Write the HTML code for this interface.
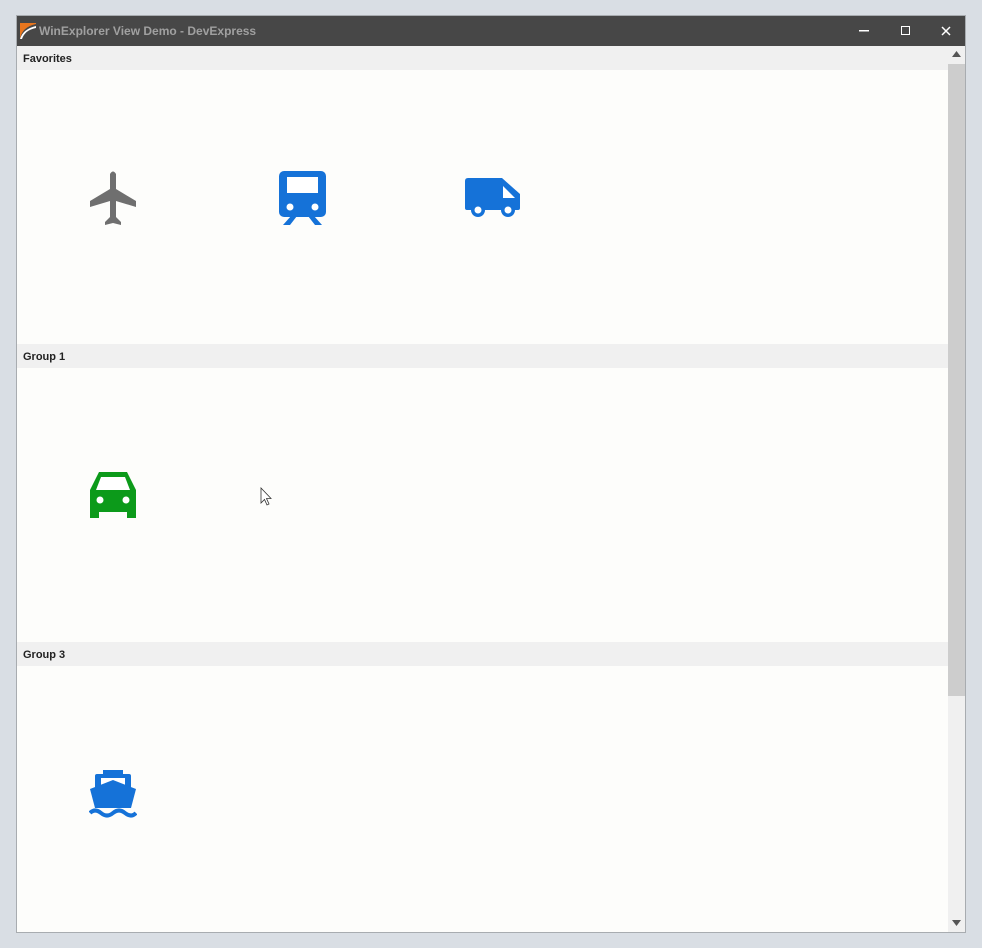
<!DOCTYPE html>
<html><head><style>
body{margin:0;width:982px;height:948px;background:#d9dee4;position:relative;overflow:hidden;font-family:"Liberation Sans",sans-serif}
.win{position:absolute;left:16px;top:15px;width:950px;height:918px;background:#fdfdfb;border:1px solid #a8acb0;box-sizing:border-box}
.title{position:absolute;left:0;top:0;width:948px;height:30px;background:#474747;color:#a0a0a0;font-size:12px;font-weight:bold;line-height:30px}
.title span{position:absolute;left:22px}
.hdr{position:absolute;left:0;width:931px;height:24px;background:#f0f0f0;font-size:11px;font-weight:bold;color:#222;line-height:26px;padding-left:6px;box-sizing:border-box}
.sb{position:absolute;left:931px;top:30px;width:17px;height:886px;background:#f0f0f0}
.thumb{position:absolute;left:0;top:18px;width:17px;height:632px;background:#cdcdcd}
svg{position:absolute}
</style></head><body>
<div class="win">
<div class="title">
<svg style="left:3px;top:7px" width="16" height="16" viewBox="0 0 16 16"><rect width="16" height="16" fill="#474747"/><path d="M0 16 Q2 4 16 1 L16 0 L0 0Z" fill="#e8761e"/><path d="M0 16 Q3 6 16 3 L16 5 Q5 7 2 16Z" fill="#fff"/></svg>
<span>WinExplorer View Demo - DevExpress</span>
<svg style="left:842px;top:14px" width="10" height="2"><rect width="10" height="1.5" fill="#fff"/></svg>
<svg style="left:884px;top:10px" width="10" height="10"><rect x="0.5" y="0.5" width="8" height="8" fill="none" stroke="#fff"/></svg>
<svg style="left:924px;top:10px" width="10" height="10"><path d="M1 1L9 9M9 1L1 9" stroke="#fff" stroke-width="1.5"/></svg>
</div>
<div class="hdr" style="top:30px">Favorites</div>
<div class="hdr" style="top:328px">Group 1</div>
<div class="hdr" style="top:626px">Group 3</div>
<div class="sb"><div class="thumb"></div>
<svg style="left:4px;top:5px" width="9" height="6"><path d="M0 6L4.5 0L9 6Z" fill="#555"/></svg>
<svg style="left:4px;top:874px" width="9" height="6"><path d="M0 0L4.5 6L9 0Z" fill="#555"/></svg>
</div>
</div>
<svg style="left:89px;top:170px" width="48" height="56" viewBox="0 0 48 56"><path d="M21 4Q24 -1 27 4L27 19L47 31L47 37L27 31L27 47L32 52L32 55L24 53L16 55L16 52L21 47L21 31L1 37L1 31L21 19Z" fill="#6f6f6f"/></svg>
<svg style="left:279px;top:170px" width="48" height="56" viewBox="0 0 48 56"><rect x="0" y="1" width="47" height="46" rx="5" fill="#1572d8"/><rect x="8" y="7" width="31" height="16" fill="#fff"/><circle cx="11" cy="37" r="3.5" fill="#fff"/><circle cx="36" cy="37" r="3.5" fill="#fff"/><path d="M12 46L4 55H11L18 46ZM35 46L43 55H36L29 46Z" fill="#1572d8"/></svg>
<svg style="left:465px;top:178px" width="56" height="40" viewBox="0 0 56 40"><path d="M0 3Q0 0 3 0H37L55 16V30Q55 32 53 32H2Q0 32 0 30Z" fill="#1572d8"/><path d="M38 8L50 20H38Z" fill="#fff"/><circle cx="13" cy="32" r="7" fill="#1572d8"/><circle cx="13" cy="32" r="3.5" fill="#fff"/><circle cx="43" cy="32" r="7" fill="#1572d8"/><circle cx="43" cy="32" r="3.5" fill="#fff"/></svg>
<svg style="left:89px;top:472px" width="48" height="48" viewBox="0 0 48 48"><path d="M10 0H38L47 18V46H38V40H10V46H1V18Z" fill="#0c9a1a"/><path d="M12 5H36L41 18H7Z" fill="#fff"/><circle cx="11" cy="28" r="3.5" fill="#fff"/><circle cx="37" cy="28" r="3.5" fill="#fff"/></svg>
<svg style="left:89px;top:770px" width="48" height="48" viewBox="0 0 48 48"><rect x="14" y="0" width="20" height="6" fill="#1572d8"/><rect x="6" y="4" width="36" height="16" rx="2" fill="#1572d8"/><rect x="12" y="8" width="24" height="8" fill="#fff"/><path d="M1 19L24 10L47 19L42 38H6Z" fill="#1572d8"/><path d="M1 43Q6 38 12 43T24 43T36 43T47 43" stroke="#1572d8" stroke-width="4" fill="none"/></svg>
<svg style="left:260px;top:487px" width="14" height="20" viewBox="0 0 14 20"><path d="M1 1V16L4.5 12.5L7 18L9 17L6.5 11.5H11Z" fill="#fff" stroke="#333" stroke-width="0.8"/></svg>
</body></html>
